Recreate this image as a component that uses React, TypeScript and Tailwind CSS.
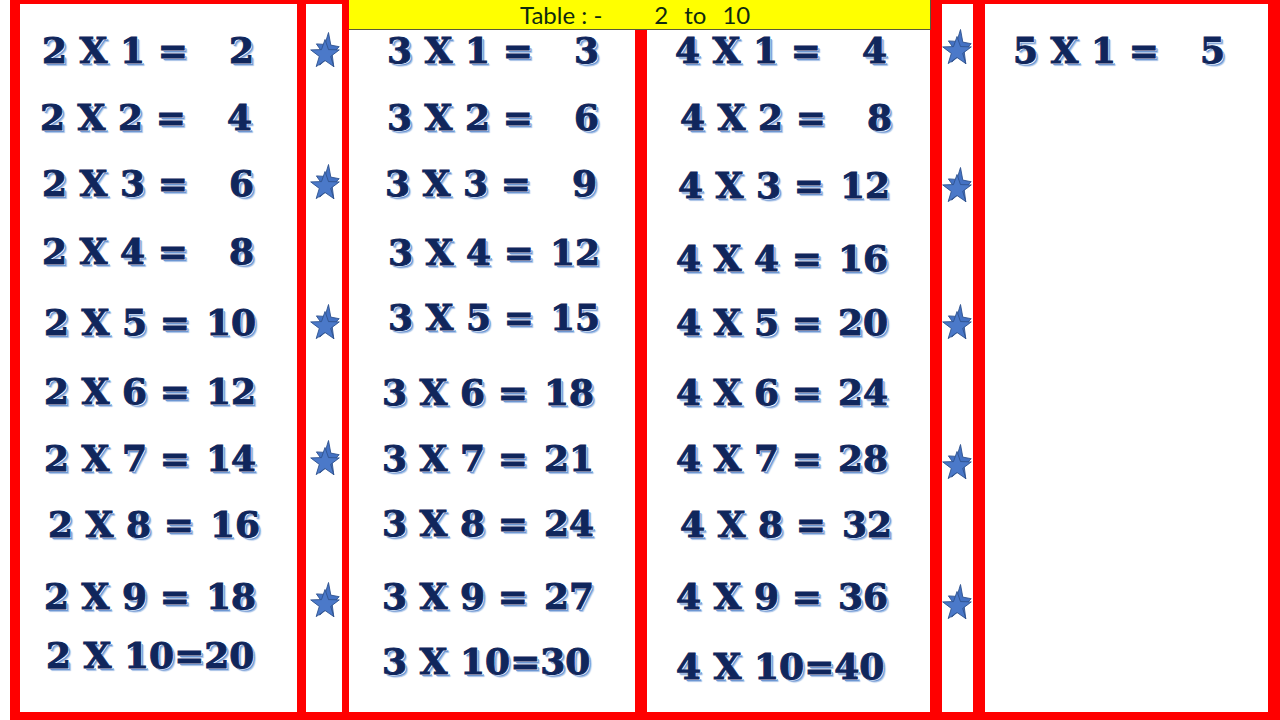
import React from "react";

type Row = { a: number; b: number; mt: string; ml: string };

const TABLE_2: Row[] = [
  { a: 2, b: 1, mt: "mt-[26px]", ml: "ml-[22px]" },
  { a: 2, b: 2, mt: "mt-[27px]", ml: "ml-[20px]" },
  { a: 2, b: 3, mt: "mt-[26px]", ml: "ml-[22px]" },
  { a: 2, b: 4, mt: "mt-[28px]", ml: "ml-[22px]" },
  { a: 2, b: 5, mt: "mt-[31px]", ml: "ml-[24px]" },
  { a: 2, b: 6, mt: "mt-[29px]", ml: "ml-[24px]" },
  { a: 2, b: 7, mt: "mt-[27px]", ml: "ml-[24px]" },
  { a: 2, b: 8, mt: "mt-[26px]", ml: "ml-[28px]" },
  { a: 2, b: 9, mt: "mt-[32px]", ml: "ml-[24px]" },
  { a: 2, b: 10, mt: "mt-[19px]", ml: "ml-[26px]" },
];

const TABLE_3: Row[] = [
  { a: 3, b: 1, mt: "mt-[26px]", ml: "ml-[38px]" },
  { a: 3, b: 2, mt: "mt-[27px]", ml: "ml-[38px]" },
  { a: 3, b: 3, mt: "mt-[26px]", ml: "ml-[36px]" },
  { a: 3, b: 4, mt: "mt-[29px]", ml: "ml-[39px]" },
  { a: 3, b: 5, mt: "mt-[25px]", ml: "ml-[39px]" },
  { a: 3, b: 6, mt: "mt-[35px]", ml: "ml-[33px]" },
  { a: 3, b: 7, mt: "mt-[26px]", ml: "ml-[33px]" },
  { a: 3, b: 8, mt: "mt-[25px]", ml: "ml-[33px]" },
  { a: 3, b: 9, mt: "mt-[33px]", ml: "ml-[33px]" },
  { a: 3, b: 10, mt: "mt-[25px]", ml: "ml-[33px]" },
];

const TABLE_4: Row[] = [
  { a: 4, b: 1, mt: "mt-[26px]", ml: "ml-[28px]" },
  { a: 4, b: 2, mt: "mt-[27px]", ml: "ml-[33px]" },
  { a: 4, b: 3, mt: "mt-[28px]", ml: "ml-[31px]" },
  { a: 4, b: 4, mt: "mt-[33px]", ml: "ml-[29px]" },
  { a: 4, b: 5, mt: "mt-[24px]", ml: "ml-[29px]" },
  { a: 4, b: 6, mt: "mt-[30px]", ml: "ml-[29px]" },
  { a: 4, b: 7, mt: "mt-[26px]", ml: "ml-[29px]" },
  { a: 4, b: 8, mt: "mt-[26px]", ml: "ml-[33px]" },
  { a: 4, b: 9, mt: "mt-[32px]", ml: "ml-[29px]" },
  { a: 4, b: 10, mt: "mt-[30px]", ml: "ml-[29px]" },
];

const TABLE_5: Row[] = [{ a: 5, b: 1, mt: "mt-[26px]", ml: "ml-[28px]" }];

// star column offsets (top margins between stars)
const STARS_LEFT = ["mt-[23px]", "mt-[90px]", "mt-[98px]", "mt-[94px]", "mt-[100px]"];
const STARS_RIGHT = ["mt-[20px]", "mt-[96px]", "mt-[95px]", "mt-[98px]", "mt-[98px]"];

const eqText =
  "font-['DejaVu_Serif',serif] font-bold text-[36px] leading-[40px] text-[#10265c] [-webkit-text-stroke:1px_#10265c] [text-shadow:1px_1px_0_#ffffff,2px_2px_0_#6e97d2,3px_3px_1px_#a8c1e6]";

function Equation({ row }: { row: Row }) {
  const r = row.a * row.b;
  if (row.b === 10) {
    return (
      <div className={`${row.mt} ${row.ml} ${eqText} whitespace-pre`}>
        {`${row.a} X 10=${r}`}
      </div>
    );
  }
  return (
    <div className={`${row.mt} ${row.ml} ${eqText} flex w-[212px] justify-between`}>
      <span className="whitespace-pre">{`${row.a} X ${row.b} =`}</span>
      <span>{r}</span>
    </div>
  );
}

function starPoints(cx: number, cy: number, ro: number, ri: number, sy = 1, rot = 0) {
  const pts: string[] = [];
  for (let i = 0; i < 10; i++) {
    const ang = -Math.PI / 2 + (i * Math.PI) / 5 + rot;
    const rad = i % 2 === 0 ? ro : ri;
    pts.push(`${(cx + rad * Math.cos(ang)).toFixed(1)},${(cy + rad * Math.sin(ang) * sy).toFixed(1)}`);
  }
  return pts.join(" ");
}

function Star({ mt }: { mt: string }) {
  return (
    <svg className={`${mt} block mx-auto`} width="32" height="42" viewBox="0 0 32 42">
      <polygon
        points={starPoints(17.5, 24, 12, 5, 1.55, 0.08)}
        fill="#4472c4"
        stroke="#2f528f"
        strokeWidth="0.9"
      />
      <polygon
        points={starPoints(15, 27.5, 15, 6)}
        fill="#4b79c9"
        stroke="#2f528f"
        strokeWidth="0.9"
      />
    </svg>
  );
}

function TableCell({ rows, width, mr }: { rows: Row[]; width: string; mr: string }) {
  return (
    <div className={`${width} ${mr} bg-white flex flex-col`}>
      {rows.map((row) => (
        <Equation key={`${row.a}-${row.b}`} row={row} />
      ))}
    </div>
  );
}

export default function App() {
  return (
    <div className="relative w-[1280px] h-[720px] bg-white overflow-hidden">
      <div className="ml-[10px] flex h-full bg-[#ff0000] pl-[10px] pt-[4px] pb-[8px] pr-[12px]">
        <TableCell rows={TABLE_2} width="w-[277px]" mr="mr-[9px]" />
        <div className="w-[36px] mr-[7px] pl-[3px] bg-white flex flex-col">
          {STARS_LEFT.map((m, i) => (
            <Star key={i} mt={m} />
          ))}
        </div>
        <TableCell rows={TABLE_3} width="w-[286px]" mr="mr-[12px]" />
        <TableCell rows={TABLE_4} width="w-[283px]" mr="mr-[12px]" />
        <div className="w-[31px] mr-[12px] bg-white flex flex-col">
          {STARS_RIGHT.map((m, i) => (
            <Star key={i} mt={m} />
          ))}
        </div>
        <TableCell rows={TABLE_5} width="w-[283px]" mr="mr-0" />
      </div>

      {/* yellow title strip over the 3 and 4 tables */}
      <div className="absolute left-[349px] top-0 w-[582px] h-[30px] bg-[#ffff00] border-b border-r border-[#5a5a3a] flex items-start font-['Lato',sans-serif] text-[24px] leading-[29px] text-[#0f2a0f]">
        <span className="ml-[171px] whitespace-pre">Table : -</span>
        <span className="ml-[52px]">2</span>
        <span className="ml-[16px]">to</span>
        <span className="ml-[16px]">10</span>
      </div>
    </div>
  );
}
